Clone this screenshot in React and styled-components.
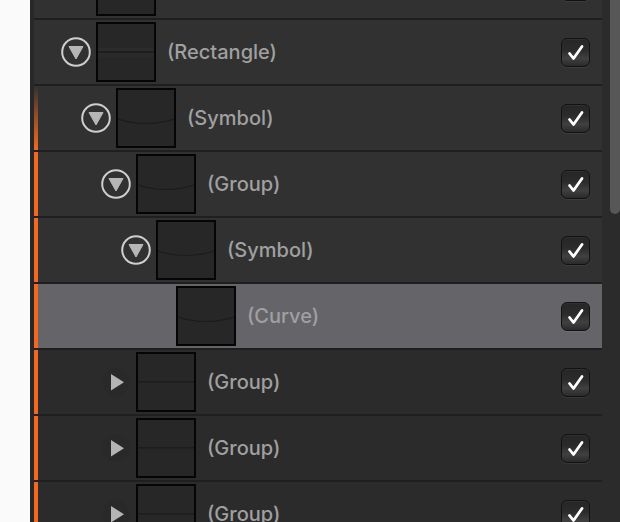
import React from "react";
import styled, { createGlobalStyle } from "styled-components";

const GlobalStyle = createGlobalStyle`
  html, body {
    margin: 0;
    padding: 0;
    background: #fafafa;
    overflow: hidden;
  }
`;

const layers = [
  { name: "", level: 0, toggle: "none", thumb: "band", stripe: "none", shade: "up" },
  { name: "(Rectangle)", level: 0, toggle: "open", thumb: "band", stripe: "none", shade: "up" },
  { name: "(Symbol)", level: 1, toggle: "open", thumb: "arc", stripe: "fade", shade: "up" },
  { name: "(Group)", level: 2, toggle: "open", thumb: "arc", stripe: "solid", shade: "up" },
  { name: "(Symbol)", level: 3, toggle: "open", thumb: "arc", stripe: "solid", shade: "up" },
  { name: "(Curve)", level: 4, toggle: "none", thumb: "arc", stripe: "solid", shade: "selected" },
  { name: "(Group)", level: 2, toggle: "closed", thumb: "line", stripe: "solid", shade: "down" },
  { name: "(Group)", level: 2, toggle: "closed", thumb: "line", stripe: "solid", shade: "down" },
  { name: "(Group)", level: 2, toggle: "closed", thumb: "line", stripe: "solid", shade: "down" },
];

function Disclosure({ state }) {
  if (state === "open") {
    return (
      <svg width="30" height="30" viewBox="0 0 30 30">
        <circle cx="15" cy="15" r="13.8" fill="none" stroke="#cfcfcf" strokeWidth="2" />
        <polygon
          points="8,9.5 22,9.5 15,22"
          fill="#b6b6b6"
          stroke="#b6b6b6"
          strokeWidth="1"
          strokeLinejoin="round"
        />
      </svg>
    );
  }
  if (state === "closed") {
    return (
      <svg width="30" height="30" viewBox="0 0 30 30">
        <circle cx="15" cy="15" r="13.5" fill="#292929" />
        <polygon points="10,7 10,23.5 23,15.2" fill="#b4b4b4" />
      </svg>
    );
  }
  return null;
}

function ThumbArt({ kind }) {
  return (
    <svg width="56" height="56" viewBox="0 0 56 56">
      {kind === "band" && (
        <>
          <rect x="0" y="24" width="56" height="3" fill="#2c2c2c" />
          <rect x="0" y="27" width="56" height="2" fill="#1e1e1e" />
          <rect x="0" y="29" width="56" height="4" fill="#2a2a2a" />
        </>
      )}
      {kind === "arc" && (
        <path d="M0 29 Q28 38 56 29" fill="none" stroke="#1c1c1c" strokeWidth="1.2" />
      )}
      {kind === "line" && <rect x="0" y="27" width="56" height="1.5" fill="#1d1d1d" />}
    </svg>
  );
}

function CheckMark() {
  return (
    <svg width="28" height="28" viewBox="0 0 28 28">
      <path
        d="M7.5 15.5 L11.5 20.5 L20 8.5"
        fill="none"
        stroke="#ffffff"
        strokeWidth="2.8"
        strokeLinecap="round"
        strokeLinejoin="round"
      />
    </svg>
  );
}

export default function App() {
  return (
    <>
      <GlobalStyle />
      <Page>
        <Gutter />
        <Panel>
          <LayerList>
            {layers.map((layer, i) => (
              <Row key={i} $shade={layer.shade}>
                <Stripe $kind={layer.stripe} />
                <Indent $level={layer.level}>
                  <ToggleSlot>
                    <Disclosure state={layer.toggle} />
                  </ToggleSlot>
                  <Thumb>
                    <ThumbArt kind={layer.thumb} />
                  </Thumb>
                  <Label>{layer.name}</Label>
                </Indent>
                <Checkbox>
                  <CheckMark />
                </Checkbox>
              </Row>
            ))}
          </LayerList>
        </Panel>
        <ScrollTrack>
          <ScrollThumb />
        </ScrollTrack>
      </Page>
    </>
  );
}

const Page = styled.div`
  display: flex;
  width: 620px;
  height: 522px;
  overflow: hidden;
`;

const Gutter = styled.div`
  width: 30px;
  flex-shrink: 0;
  background: #fafafa;
`;

const Panel = styled.div`
  flex: 1;
  background: #2e2e2e;
  border-left: 4px solid #282828;
  overflow: hidden;
`;

const LayerList = styled.div`
  display: flex;
  flex-direction: column;
  margin-top: -46px;
`;

const shades = {
  up: "#313131",
  down: "#2b2b2b",
  selected: "#646469",
};

const Row = styled.div`
  display: flex;
  align-items: center;
  height: 64px;
  border-bottom: 2px solid #1f1f1f;
  background: ${(p) => shades[p.$shade]};
`;

const Stripe = styled.div`
  width: 4px;
  align-self: stretch;
  flex-shrink: 0;
  background: ${(p) =>
    p.$kind === "solid"
      ? "#f4681f"
      : p.$kind === "fade"
      ? "linear-gradient(to bottom, rgba(244,104,31,0) 0%, rgba(244,104,31,0.5) 45%, #f4681f 100%)"
      : "transparent"};
`;

const Indent = styled.div`
  flex: 1;
  display: flex;
  align-items: center;
  padding-left: ${(p) => 18 + p.$level * 20}px;
`;

const ToggleSlot = styled.div`
  width: 40px;
  height: 30px;
  display: flex;
  align-items: center;
  justify-content: center;
  flex-shrink: 0;
`;

const Thumb = styled.div`
  width: 56px;
  height: 56px;
  flex-shrink: 0;
  border: 2px solid #050505;
  background: #272727;
  display: flex;

  svg {
    display: block;
  }
`;

const Label = styled.span`
  margin-left: 11px;
  font-family: "Inter", "Liberation Sans", sans-serif;
  font-size: 20px;
  font-weight: 500;
  color: #a0a0a0;
  white-space: nowrap;
`;

const Checkbox = styled.div`
  width: 27px;
  height: 27px;
  margin-right: 12px;
  flex-shrink: 0;
  border: 1px solid #121212;
  border-radius: 6px;
  background: linear-gradient(
    to bottom,
    #262626 0%,
    #2b2b2b 40%,
    #404040 72%,
    #2a2a2a 100%
  );
  box-shadow: 0 1px 1px rgba(255, 255, 255, 0.07), inset 0 1px 0 rgba(255, 255, 255, 0.05);
  display: flex;
  align-items: center;
  justify-content: center;

  svg {
    display: block;
    flex-shrink: 0;
  }
`;

const ScrollTrack = styled.div`
  width: 18px;
  flex-shrink: 0;
  background: #2b2b2b;
  display: flex;
  justify-content: flex-end;
`;

const ScrollThumb = styled.div`
  width: 10px;
  height: 214px;
  background: #575757;
  border-radius: 0 0 5px 5px;
`;
